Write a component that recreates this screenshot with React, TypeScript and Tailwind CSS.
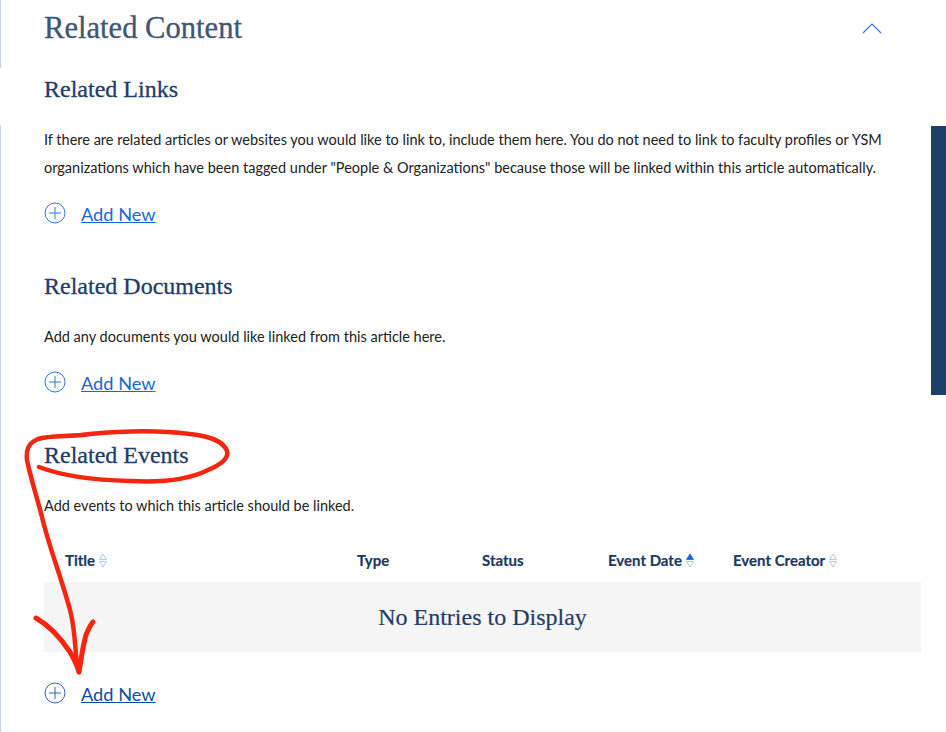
const SERIF = "font-['Liberation_Serif',serif]";

function PlusCircle({ dark = false }: { dark?: boolean }) {
  return (
    <svg width="22" height="22" viewBox="0 0 22 22" fill="none" stroke={dark ? "#2f62b0" : "#2f78e0"} strokeWidth="1" className="mb-[2px]">
      <circle cx="11" cy="11" r="10" />
      <path d="M11 5v12M5 11h12" />
    </svg>
  );
}

function AddNew({ dark = false }: { dark?: boolean }) {
  return (
    <div className="flex items-center gap-[15px] h-[24px]">
      <PlusCircle dark={dark} />
      <a href="#" className={`text-[18.2px] leading-[24px] underline ${dark ? "text-[#0b4ea2]" : "text-[#1668d8]"}`}>
        Add New
      </a>
    </div>
  );
}

function SortIcon({ active = false }: { active?: boolean }) {
  return (
    <svg width="8" height="15" viewBox="0 0 8 15" className="ml-[4px]">
      <path d="M4 1L7.5 6.5H0.5Z" fill={active ? "#1668d8" : "none"} stroke={active ? "#1668d8" : "#9dbcf0"} strokeWidth="0.8" />
      <path d="M4 14L7.5 8.5H0.5Z" fill="none" stroke="#9dbcf0" strokeWidth="0.8" />
    </svg>
  );
}

function SubHeading({ children }: { children: string }) {
  return <h3 className={`${SERIF} text-[24px] leading-[30px] text-[#1f3d68] [-webkit-text-stroke:0.3px]`}>{children}</h3>;
}

function Column({ label, width, sort, active }: { label: string; width: string; sort?: boolean; active?: boolean }) {
  return (
    <div className={`flex items-center ${width}`}>
      <span className="text-[15px] font-bold text-[#1c3a66] [-webkit-text-stroke:0.2px]">{label}</span>
      {sort && <SortIcon active={active} />}
    </div>
  );
}

export default function App() {
  return (
    <div className="relative h-[732px] w-[946px] overflow-hidden bg-white font-['Lato',sans-serif] text-[#222]">
      {/* left rule, broken where the screenshot was patched */}
      <div className="absolute left-0 top-0 h-[68px] w-[1px] bg-[#c4d2e6]" />
      <div className="absolute left-0 top-[125px] bottom-0 w-[1px] bg-[#c4d2e6]" />
      {/* scroll thumb */}
      <div className="absolute right-0 top-[126px] h-[269px] w-[15px] bg-[#1c3f6b]" />

      <main className="pl-[44px] pr-[25px] pt-[9px]">
        <div className="flex items-center justify-between pr-[39px]">
          <h2 className={`${SERIF} text-[30.6px] leading-[38px] text-[#3f5674] [-webkit-text-stroke:0.3px]`}>Related Content</h2>
          <svg width="20" height="12" viewBox="0 0 20 12" fill="none" stroke="#2f78e0" strokeWidth="1.2">
            <path d="M1 11L10 2l9 9" />
          </svg>
        </div>

        <section className="mt-[27px]">
          <SubHeading>Related Links</SubHeading>
          <p className="mt-[22px] text-[14.5px] leading-[28px]">
            If there are related articles or websites you would like to link to, include them here. You do not need to link to faculty profiles or YSM
            <br />
            organizations which have been tagged under "People &amp; Organizations" because those will be linked within this article automatically.
          </p>
          <div className="mt-[20px]">
            <AddNew />
          </div>
        </section>

        <section className="mt-[45px]">
          <SubHeading>Related Documents</SubHeading>
          <p className="mt-[22px] text-[14.5px] leading-[28px]">Add any documents you would like linked from this article here.</p>
          <div className="mt-[20px]">
            <AddNew />
          </div>
        </section>

        <section className="mt-[45px]">
          <SubHeading>Related Events</SubHeading>
          <p className="mt-[22px] text-[14.5px] leading-[28px]">Add events to which this article should be linked.</p>
          <div className="mt-[23px] flex h-[34px] items-center pl-[21px]">
            <Column label="Title" width="w-[292px]" sort />
            <Column label="Type" width="w-[125px]" />
            <Column label="Status" width="w-[126px]" />
            <Column label="Event Date" width="w-[125px]" sort active />
            <Column label="Event Creator" width="w-[120px]" sort />
          </div>
          <div className={`${SERIF} mt-[5px] flex h-[70px] items-center justify-center bg-[#f5f5f5] text-[24px] text-[#1f3d68] [-webkit-text-stroke:0.2px]`}>
            No Entries to Display
          </div>
          <div className="mt-[30px]">
            <AddNew dark />
          </div>
        </section>
      </main>

      {/* hand-drawn red annotation */}
      <svg className="absolute inset-0 pointer-events-none" width="946" height="732" viewBox="0 0 946 732" fill="none" stroke="#f4260f" strokeLinecap="round" strokeLinejoin="round">
        <path
          strokeWidth="4.5"
          d="M39 467C60 475 90 480 130 481C165 483 190 479 208 470C222 464 229 458 227 451C224 442 210 436 190 434C160 430 120 431 90 434C70 437 50 435 38 439C28 443 26 450 27 460C31 480 38 500 44 525C52 555 62 580 70 610C74 625 75 640 76 655C77 662 78 668 79 672"
        />
        <path strokeWidth="5" d="M36 618C50 626 62 640 70 652C74 659 77 665 79 672C81 660 83 645 86 635C88 630 90 625 93 622" />
      </svg>
    </div>
  );
}
